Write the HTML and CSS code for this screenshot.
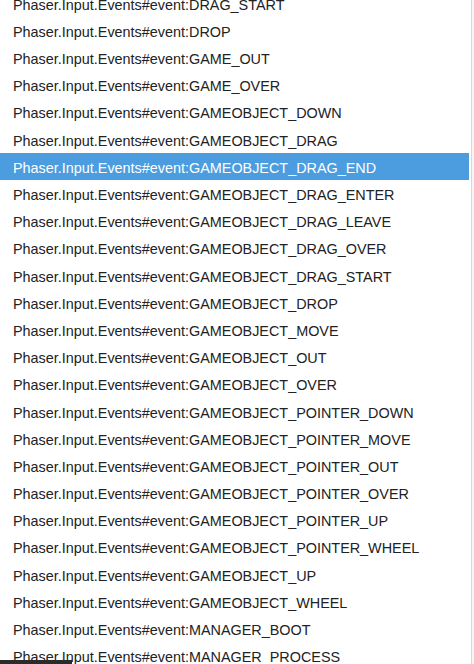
FILE: index.html
```html
<!DOCTYPE html>
<html>
<head>
<meta charset="utf-8">
<link rel="stylesheet" href="styles.css">
</head>
<body>
<div class="frame">
  <ul class="list">
    <li class="item">Phaser.Input.Events#event:DRAG_START</li>
    <li class="item">Phaser.Input.Events#event:DROP</li>
    <li class="item">Phaser.Input.Events#event:GAME_OUT</li>
    <li class="item">Phaser.Input.Events#event:GAME_OVER</li>
    <li class="item">Phaser.Input.Events#event:GAMEOBJECT_DOWN</li>
    <li class="item">Phaser.Input.Events#event:GAMEOBJECT_DRAG</li>
    <li class="item selected">Phaser.Input.Events#event:GAMEOBJECT_DRAG_END</li>
    <li class="item">Phaser.Input.Events#event:GAMEOBJECT_DRAG_ENTER</li>
    <li class="item">Phaser.Input.Events#event:GAMEOBJECT_DRAG_LEAVE</li>
    <li class="item">Phaser.Input.Events#event:GAMEOBJECT_DRAG_OVER</li>
    <li class="item">Phaser.Input.Events#event:GAMEOBJECT_DRAG_START</li>
    <li class="item">Phaser.Input.Events#event:GAMEOBJECT_DROP</li>
    <li class="item">Phaser.Input.Events#event:GAMEOBJECT_MOVE</li>
    <li class="item">Phaser.Input.Events#event:GAMEOBJECT_OUT</li>
    <li class="item">Phaser.Input.Events#event:GAMEOBJECT_OVER</li>
    <li class="item">Phaser.Input.Events#event:GAMEOBJECT_POINTER_DOWN</li>
    <li class="item">Phaser.Input.Events#event:GAMEOBJECT_POINTER_MOVE</li>
    <li class="item">Phaser.Input.Events#event:GAMEOBJECT_POINTER_OUT</li>
    <li class="item">Phaser.Input.Events#event:GAMEOBJECT_POINTER_OVER</li>
    <li class="item">Phaser.Input.Events#event:GAMEOBJECT_POINTER_UP</li>
    <li class="item">Phaser.Input.Events#event:GAMEOBJECT_POINTER_WHEEL</li>
    <li class="item">Phaser.Input.Events#event:GAMEOBJECT_UP</li>
    <li class="item">Phaser.Input.Events#event:GAMEOBJECT_WHEEL</li>
    <li class="item">Phaser.Input.Events#event:MANAGER_BOOT</li>
    <li class="item">Phaser.Input.Events#event:MANAGER_PROCESS</li>
  </ul>
  <div class="scrolltrack"></div>
  <div class="dock"></div>
</div>
</body>
</html>
```
FILE: styles.css
```css
html, body {
  margin: 0;
  padding: 0;
  background: #ffffff;
}
.frame {
  position: relative;
  width: 474px;
  height: 664px;
  overflow: hidden;
  display: flex;
  background: #ffffff;
}
.list {
  list-style: none;
  margin: -10.3px 0 0 0;
  padding: 0;
  width: 469px;
  flex: none;
}
.item {
  height: 24.2px;
  padding-top: 3px;
  line-height: 24.2px;
  padding-left: 13px;
  font-family: "Liberation Sans", Arial, sans-serif;
  font-size: 14.4px;
  color: #222222;
  white-space: nowrap;
}
.item.selected {
  background: #4b9de0;
  color: #ffffff;
}
.scrolltrack {
  flex: 1;
  margin-left: 2px;
  border-left: 1px solid #d8d8d8;
  background: #f6f6f6;
}
.dock {
  position: absolute;
  left: 0;
  bottom: 0;
  width: 72px;
  height: 4px;
  background: #2b2b2b;
}
```
